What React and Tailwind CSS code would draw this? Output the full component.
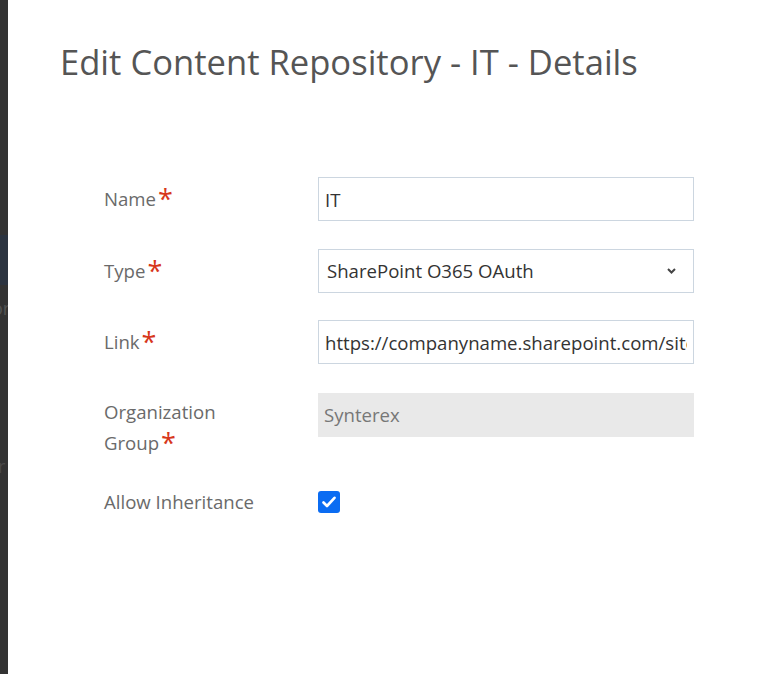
import React from 'react';

const Required = () => (
  <span className="text-[#d7371b] text-[27px] leading-none relative top-[3px] ml-[2px]">*</span>
);

const Row = ({ label, children, className = '' }) => (
  <div className={`flex items-start ${className}`}>
    <div className="w-[214px] shrink-0 pt-[5px] text-[18.6px] leading-[28px] text-[#6a6a6a]">{label}</div>
    <div className="w-[376px]">{children}</div>
  </div>
);

const App = () => {
  return (
    <div className="flex h-[674px] w-[768px] overflow-hidden" style={{ fontFamily: '"Open Sans", sans-serif' }}>
      <div className="w-[8px] shrink-0 bg-[#333] flex flex-col overflow-hidden">
        <div className="h-[235px]" />
        <div className="h-[50px] bg-[#2c3440]" />
        <div className="mt-[14px] text-[18px] text-[#555] -ml-[8px] leading-none">or</div>
        <div className="mt-[140px] text-[18px] text-[#4a4a4a] -ml-[2px] leading-none">r</div>
      </div>

      <div className="flex-1 bg-white">
        <h1 className="ml-[52px] mt-[38px] text-[34.6px] leading-[48px] text-[#555] font-normal">
          Edit Content Repository - IT - Details
        </h1>

        <div className="ml-[96px] mt-[91px] flex flex-col">
          <Row label={<>Name<Required /></>}>
            <input
              readOnly
              value="IT"
              className="w-full h-[44px] border border-[#ccd6e0] px-[6px] text-[18.6px] text-[#333] outline-none"
            />
          </Row>

          <Row className="mt-[28px]" label={<>Type<Required /></>}>
            <div className="w-full h-[44px] border border-[#ccd6e0] pl-[8px] pr-[17px] flex items-center justify-between text-[18.6px] text-[#333]">
              <span>SharePoint O365 OAuth</span>
              <svg width="9" height="6" viewBox="0 0 9 6">
                <path d="M1 1l3.5 3.5L8 1" fill="none" stroke="#444" strokeWidth="2" />
              </svg>
            </div>
          </Row>

          <Row className="mt-[27px]" label={<>Link<Required /></>}>
            <input
              readOnly
              value="https://companyname.sharepoint.com/sites/IT"
              className="w-full h-[44px] border border-[#ccd6e0] px-[6px] text-[18.6px] text-[#333] outline-none"
            />
          </Row>

          <Row className="mt-[29px]" label={<>Organization<br />Group<Required /></>}>
            <div className="w-full h-[44px] bg-[#e9e9e9] px-[6px] flex items-center text-[18.6px] text-[#777]">
              Synterex
            </div>
          </Row>

          <div className="flex items-center mt-[31px]">
            <div className="w-[214px] shrink-0 text-[18.6px] leading-[28px] text-[#6a6a6a]">Allow Inheritance</div>
            <div className="w-[22px] h-[22px] rounded-[3px] bg-[#0b6cf2] flex items-center justify-center">
              <svg width="14" height="12" viewBox="0 0 14 12">
                <path d="M1.5 6.5l3.5 3.5L12.5 1.8" fill="none" stroke="#fff" strokeWidth="2.6" strokeLinecap="round" strokeLinejoin="round" />
              </svg>
            </div>
          </div>
        </div>
      </div>
    </div>
  );
};

export default App;
